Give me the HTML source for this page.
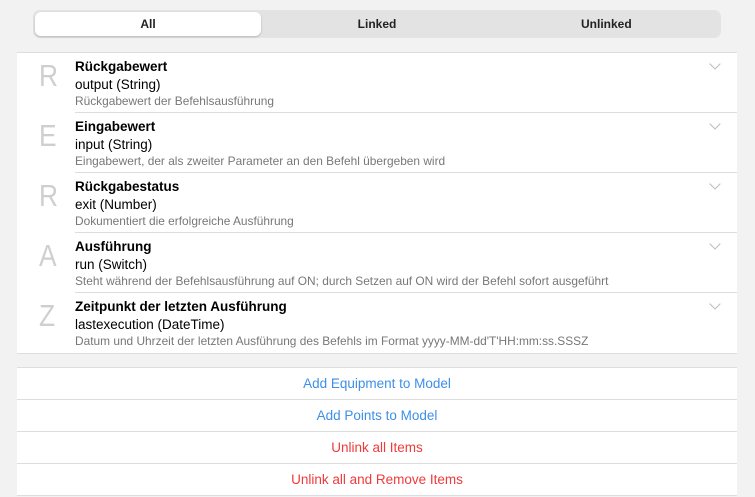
<!DOCTYPE html>
<html><head><style>
*{margin:0;padding:0;box-sizing:border-box}
body{width:755px;height:497px;background:#f2f2f2;font-family:"Liberation Sans",sans-serif;position:relative;overflow:hidden}
.seg{position:absolute;left:33px;top:10px;width:688px;height:28px;background:#e3e3e3;border-radius:7px;display:flex;font-size:12px;font-weight:bold;color:#222}
.seg div{flex:1;text-align:center;line-height:28px}
.seg .on{position:absolute;left:2px;top:2px;width:226px;height:24px;background:#fff;border-radius:6px;box-shadow:0 1px 2px rgba(0,0,0,.2);line-height:24px}
.list{position:absolute;left:17px;top:52px;width:720px;background:#fff;border-top:1px solid #ddd;border-bottom:1px solid #ddd}
.row{height:60px;position:relative}
.row .l{position:absolute;left:22px;top:5px;font-size:31px;color:#cfcfcf;font-weight:normal;transform:scaleX(.85);transform-origin:left}
.row .t{position:absolute;left:58px;top:6px;font-size:13.5px;font-weight:bold;color:#000}
.row .s{position:absolute;left:58px;top:24px;font-size:13.5px;color:#000}
.row .d{position:absolute;left:58px;top:41px;font-size:11.9px;color:#777}
.row .c{position:absolute;right:18px;top:7px;width:8px;height:8px;border-right:1px solid #bbb;border-bottom:1px solid #bbb;transform:rotate(45deg)}
.row:not(:last-child)::after{content:"";position:absolute;left:58px;right:0;bottom:0;border-bottom:1px solid #ddd}
.btns{position:absolute;left:17px;top:367px;width:720px;background:#fff;border-top:1px solid #ddd}
.btns div{height:32px;line-height:31px;text-align:center;font-size:13.5px;border-bottom:1px solid #ddd}
.b{color:#3d8fe8}.r{color:#f03a3a}
</style></head><body>
<div class="seg"><div class="on">All</div><div></div><div>Linked</div><div>Unlinked</div></div>
<div class="list">
<div class="row"><span class="l">R</span><span class="t">Rückgabewert</span><span class="s">output (String)</span><span class="d">Rückgabewert der Befehlsausführung</span><span class="c"></span></div>
<div class="row"><span class="l">E</span><span class="t">Eingabewert</span><span class="s">input (String)</span><span class="d">Eingabewert, der als zweiter Parameter an den Befehl übergeben wird</span><span class="c"></span></div>
<div class="row"><span class="l">R</span><span class="t">Rückgabestatus</span><span class="s">exit (Number)</span><span class="d">Dokumentiert die erfolgreiche Ausführung</span><span class="c"></span></div>
<div class="row"><span class="l">A</span><span class="t">Ausführung</span><span class="s">run (Switch)</span><span class="d">Steht während der Befehlsausführung auf ON; durch Setzen auf ON wird der Befehl sofort ausgeführt</span><span class="c"></span></div>
<div class="row"><span class="l">Z</span><span class="t">Zeitpunkt der letzten Ausführung</span><span class="s">lastexecution (DateTime)</span><span class="d">Datum und Uhrzeit der letzten Ausführung des Befehls im Format yyyy-MM-dd'T'HH:mm:ss.SSSZ</span><span class="c"></span></div>
</div>
<div class="btns">
<div class="b">Add Equipment to Model</div>
<div class="b">Add Points to Model</div>
<div class="r">Unlink all Items</div>
<div class="r">Unlink all and Remove Items</div>
</div>
</body></html>
